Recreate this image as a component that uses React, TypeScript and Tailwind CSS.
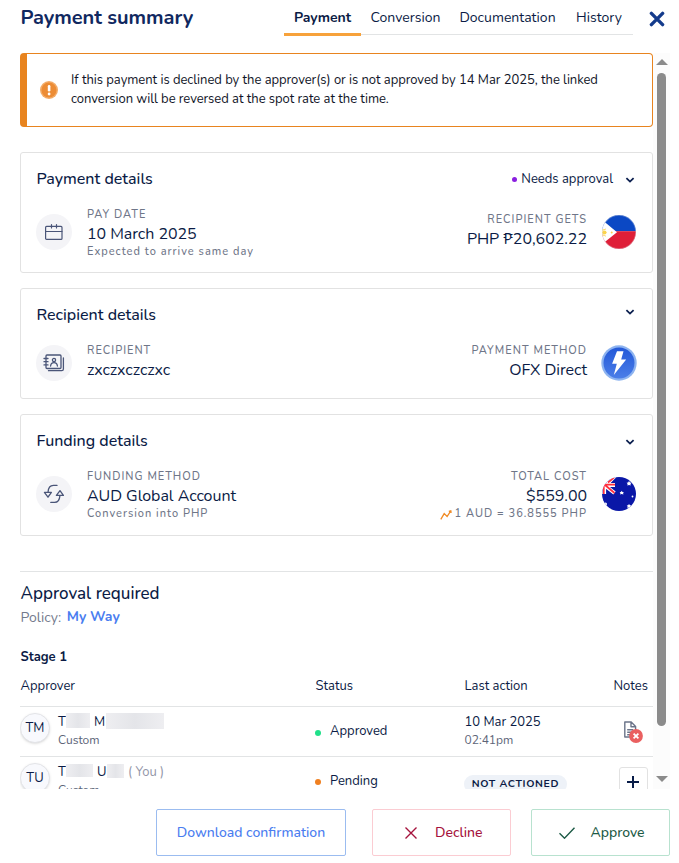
import type { ReactNode } from "react";
import { clsx } from "clsx";

const tabs = [
  { label: "Payment", className: "w-[77px] font-bold" },
  { label: "Conversion", className: "w-[89px]" },
  { label: "Documentation", className: "w-[115px]" },
  { label: "History", className: "w-[68px]" },
];

const ChevronDown = ({ className }: { className?: string }) => (
  <svg
    viewBox="0 0 10 8"
    className={clsx("h-2 w-2.5 shrink-0", className)}
    fill="none"
    stroke="#0b1f4f"
    strokeWidth="1.8"
  >
    <path d="M1.4 2.2 5 5.6l3.6-3.4" />
  </svg>
);

const CalendarIcon = () => (
  <svg
    viewBox="0 0 18 18"
    className="h-[18px] w-[18px]"
    fill="none"
    stroke="#4a5578"
    strokeWidth="1.2"
    strokeLinecap="round"
  >
    <rect x="0.6" y="3.4" width="16.4" height="13" rx="1" />
    <path d="M.6 8.500h16.400M6.500 1.500v3.400M11.500 1.500v3.400" />
  </svg>
);

const ContactIcon = () => (
  <svg
    viewBox="0 0 22 18"
    className="h-[18px] w-[22px]"
    fill="none"
    stroke="#4a5578"
    strokeWidth="1.3"
    strokeLinecap="round"
  >
    <rect x="3" y="1" width="15" height="13.5" rx="1" />
    <path d="M1 4.5h4M1 7.7h4M1 10.9h4" />
    <path d="M20.4 4v11a1.7 1.7 0 0 1-1.7 1.7H5.5" />
    <circle cx="11" cy="6" r="1.6" />
    <path d="M7.6 12c.2-2.2 1.5-3.4 3.4-3.4s3.200 1.200 3.400 3.400" />
  </svg>
);

const ExchangeIcon = () => (
  <svg
    viewBox="0 0 22 20"
    className="h-5 w-[22px]"
    fill="none"
    stroke="#4a5578"
    strokeWidth="1.3"
    strokeLinecap="round"
    strokeLinejoin="round"
  >
    <path d="M14 1.400h-3.600C7.300 1.400 5.300 4 5 8.200M1.400 8.400h7L5 13.200z" />
    <path d="M7.800 18.400h3.800c3.200 0 5-2.600 5.300-6.800M13.400 11.400h7L17 6.600z" />
  </svg>
);

const PhilippinesFlag = () => (
  <svg viewBox="0 0 34 34" className="h-[34px] w-[34px]">
    <defs>
      <clipPath id="ph">
        <circle cx="17" cy="17" r="17" />
      </clipPath>
    </defs>
    <g clipPath="url(#ph)">
      <rect width="34" height="16.200" fill="#0b48c4" />
      <rect y="16.200" width="34" height="18" fill="#df1f38" />
      <path d="M-1 4 15 17.200-1 30z" fill="#fff" />
      <circle cx="2.600" cy="17.500" r="1.900" fill="#fbd34d" />
      <path
        d="M.8 14v7M-.5 17.500h5M1 15l3-1M1 20l3 1.200"
        stroke="#fbd34d"
        strokeWidth=".8"
      />
      <circle cx="9.700" cy="17.500" r="1" fill="#fbd34d" />
    </g>
    <circle
      cx="17"
      cy="17"
      r="16.700"
      fill="none"
      stroke="#d9dbe3"
      strokeOpacity=".6"
      strokeWidth=".6"
    />
  </svg>
);

const AustraliaFlag = () => (
  <svg viewBox="0 0 34 34" className="h-[34px] w-[34px]">
    <defs>
      <clipPath id="au">
        <circle cx="17" cy="17" r="17" />
      </clipPath>
    </defs>
    <g clipPath="url(#au)">
      <rect width="34" height="34" fill="#0a17a7" />
      <path
        d="M-1 8h14M2.200-1v18M1 7l11.500 9M4 8 13-1"
        stroke="#fff"
        strokeWidth="3.800"
      />
      <path
        d="M-1 7.600h14M1.800 7v10M3 8l9.500 8M6 5.500 12 .5"
        stroke="#ff2d3d"
        strokeWidth="1.700"
      />
      <g fill="#fff">
        <path d="m27 4 1 1.500 1.500.2-1 1.200.2 1.600-1.700-.6-1.600.6.200-1.600-1-1.200 1.500-.2z" />
        <path d="m19.700 13.800.8 1.100 1.400.1-.8 1.100.3 1.500-1.700-.5-1.500.5.200-1.500-.8-1.100 1.400-.1z" />
        <path d="m27 27 1 1.200 1.400.2-.9 1.100.2 1.500-1.700-.6-1.600.6.200-1.500-.9-1.100 1.400-.2z" />
        <circle cx="30.500" cy="19.500" r=".9" />
        <circle cx="3.500" cy="27" r="1.500" />
      </g>
    </g>
  </svg>
);

const DirectIcon = () => (
  <svg viewBox="0 0 36 36" className="h-9 w-9">
    <defs>
      <linearGradient id="direct" x1="0" y1="0" x2="0" y2="1">
        <stop offset="0" stopColor="#2358d8" />
        <stop offset="1" stopColor="#4b7ee8" />
      </linearGradient>
    </defs>
    <circle cx="18" cy="18" r="17.700" fill="#8eb4f0" />
    <circle cx="18" cy="18" r="15.500" fill="url(#direct)" />
    <path d="M16 6.200h6.500l-2.300 8.400h5L12.800 30l3-11.300h-4.700z" fill="#fff" />
  </svg>
);

const TrendIcon = () => (
  <svg
    viewBox="0 0 12 12"
    className="h-3 w-3 translate-y-px"
    fill="none"
    stroke="#f08a24"
    strokeWidth="1.300"
  >
    <path d="m.8 10.400 3.400-5.800 2.900 2.900L10.800 1.800M8.800 2.300l2-.5.400 2" />
  </svg>
);

const NoteIcon = () => (
  <svg viewBox="0 0 20 22" className="h-[22px] w-5" fill="none">
    <path
      d="M1.800 1h6.400L12.600 5.400V16H1.800zM8 1v4.700h4.600M4.200 8.700h6M4.200 11.200h6M4.200 13.700h4"
      stroke="#6b7489"
      strokeWidth="1.400"
      strokeLinejoin="round"
    />
    <circle cx="13" cy="15" r="6.900" fill="#ea6060" />
    <path
      d="m10.600 12.600 4.800 4.800M15.400 12.600l-4.800 4.800"
      stroke="#fff"
      strokeWidth="1.800"
    />
  </svg>
);

const Label = ({ children }: { children: ReactNode }) => (
  <div className="h-4 text-[11px] leading-[18px] font-medium tracking-[1px] text-[#6f7688]">
    {children}
  </div>
);

const Value = ({ children }: { children: ReactNode }) => (
  <div className="text-base leading-6 tracking-[-0.04px]">{children}</div>
);

const SubText = ({ children }: { children: ReactNode }) => (
  <div className="flex h-3 items-center justify-end gap-0.5 text-[11px] leading-3 font-medium tracking-[1px] text-[#6f7688]">
    {children}
  </div>
);

type DetailCardProps = {
  title: string;
  className: string;
  status?: ReactNode;
  chevronClassName?: string;
  icon: ReactNode;
  left: ReactNode;
  right: ReactNode;
  badge: ReactNode;
};

const DetailCard = ({
  title,
  className,
  status,
  chevronClassName,
  icon,
  left,
  right,
  badge,
}: DetailCardProps) => (
  <section
    className={clsx(
      "shrink-0 rounded-[3px] border border-[#e2e2e2] px-[15px] pt-3.5",
      className
    )}
  >
    <div className="flex h-6 items-center justify-between pr-0.5 pl-[0.5px]">
      <h2 className="text-base font-medium">{title}</h2>
      <div className="flex items-center gap-3">
        {status}
        <ChevronDown className={chevronClassName} />
      </div>
    </div>
    <div className="mt-[15px] flex items-center">
      <div className="flex h-9 w-9 items-center justify-center rounded-full bg-[#f4f4f7]">
        {icon}
      </div>
      <div className="ml-[15px] flex flex-1 flex-col items-start">{left}</div>
      <div className="mr-3.5 text-right">{right}</div>
      <div className="flex w-9 justify-center">{badge}</div>
    </div>
  </section>
);

const Avatar = ({ initials }: { initials: string }) => (
  <div className="mt-1.5 flex h-[30px] w-[30px] shrink-0 items-center justify-center rounded-full border border-[#e3e4e8] bg-[#f8f9fd] pb-px text-[13px] leading-4 shadow-sm">
    {initials}
  </div>
);

// Masked part of a name
const Redacted = ({ className }: { className: string }) => (
  <span
    className={clsx(
      "-mt-[5px] inline-block bg-linear-to-r from-[#eeeef1] via-[#e4e5e9] to-[#eeeef1]",
      className
    )}
  />
);

const Header = () => (
  <header className="flex h-[53px] shrink-0 items-start pl-[20.5px]">
    <h1 className="w-[263.5px] pt-[3px] text-xl leading-[30px] font-bold tracking-[-0.04px] text-[#102860]">
      Payment summary
    </h1>
    <nav className="flex h-[35px] border-b border-[#e2e4e5]">
      {tabs.map((tab, i) => (
        <button
          key={tab.label}
          className={clsx(
            "h-9 pt-0.5 text-center text-sm",
            i === 0 ? "border-b-[3px] border-[#f7a23b]" : "pb-[3px]",
            tab.className
          )}
        >
          {tab.label}
        </button>
      ))}
    </nav>
    <button aria-label="Close" className="mt-[11px] ml-4">
      <svg
        viewBox="0 0 16 16"
        className="h-4 w-4"
        stroke="#143b8c"
        strokeWidth="3.400"
        strokeLinecap="round"
      >
        <path d="m2.400 2.400 11.200 11.200M13.600 2.400 2.400 13.600" />
      </svg>
    </button>
  </header>
);

const Scrollbar = () => (
  <div className="flex w-[17px] flex-col items-center bg-[#fcfcfc] pt-1.5 pb-[7px]">
    <svg viewBox="0 0 12 6" className="h-1.5 w-3" fill="#8b8b8b">
      <path d="m6 0 6 6H0z" />
    </svg>
    <div className="mt-2 h-[653px] w-[9px] rounded-full bg-[#8b8b8b]" />
    <svg viewBox="0 0 12 6" className="mt-auto h-1.5 w-3" fill="#8b8b8b">
      <path d="M0 0h12L6 6z" />
    </svg>
  </div>
);

const columns = "grid grid-cols-[295.5px_149px_1fr_39.5px]";

const ApprovalTable = () => (
  <section className="mt-[35px] shrink-0 border-t border-[#e2e4e5] pt-2.5">
    <h2 className="pl-[0.5px] text-[17px] leading-6 font-medium">
      Approval required
    </h2>
    <p className="pl-[0.5px] text-sm leading-6 text-[#737a8c]">
      Policy:{" "}
      <a className="ml-0.5 inline-block -translate-y-px font-bold text-[#4a7df0]">
        My Way
      </a>
    </p>
    <h3 className="mt-[17px] pl-[0.5px] text-[13px] leading-5 font-bold">
      Stage 1
    </h3>
    <div
      className={clsx(
        columns,
        "mt-1 h-[35px] items-center pb-[5px] text-[13px] leading-5"
      )}
    >
      <span className="pl-[0.5px]">Approver</span>
      <span>Status</span>
      <span>Last action</span>
      <span>Notes</span>
    </div>

    <div
      className={clsx(
        columns,
        "h-[50px] border-t border-[#e2e4e5] text-[13px]"
      )}
    >
      <div className="flex gap-2">
        <Avatar initials="TM" />
        <div>
          <div className="mt-1.5 flex h-[18px] items-center pt-0.5">
            <span className="w-2">T</span>
            <Redacted className="h-[15px] w-6" />
            <span className="ml-1 w-3">M</span>
            <Redacted className="h-4 w-[58px]" />
          </div>
          <div className="text-xs leading-[18px] text-[#5c6478]">Custom</div>
        </div>
      </div>
      <div className="-ml-px flex items-center gap-[9.5px]">
        <span className="mt-0.5 h-1.5 w-1.5 rounded-full bg-[#20e08a]" />
        Approved
      </div>
      <div className="pt-1.5 leading-[18px]">
        <div>10 Mar 2025</div>
        <div className="text-xs leading-[18px] text-[#5c6478]">02:41pm</div>
      </div>
      <div className="pt-3.5 pl-[9.5px]">
        <NoteIcon />
      </div>
    </div>

    <div
      className={clsx(
        columns,
        "h-[50px] border-t border-[#e2e4e5] text-[13px]"
      )}
    >
      <div className="flex gap-2">
        <Avatar initials="TU" />
        <div>
          <div className="mt-1.5 flex h-[18px] items-center pt-0.5">
            <span className="w-2">T</span>
            <Redacted className="h-[13px] w-[27px]" />
            <span className="ml-1 w-2.5">U</span>
            <Redacted className="h-3.5 w-[17px]" />
            <span className="ml-1 text-[#9296a8]">( You )</span>
          </div>
          <div className="text-xs leading-[18px] text-[#5c6478]">Custom</div>
        </div>
      </div>
      <div className="-ml-px flex items-center gap-[9.5px]">
        <span className="h-1.5 w-1.5 rounded-full bg-[#f08020]" />
        Pending
      </div>
      <div className="-ml-[0.5px] pt-[18px]">
        <span className="flex h-[18px] w-[103px] items-center justify-center rounded-full bg-[#eef2f8] text-[10.5px] font-bold tracking-[0.65px]">
          NOT ACTIONED
        </span>
      </div>
      <div className="pt-2.5 pl-[5px]">
        <button className="flex h-[29px] w-[29px] items-center justify-center rounded-[3px] border border-[#e2e2e2]">
          <svg
            viewBox="0 0 12 12"
            className="h-3 w-3"
            stroke="#081c48"
            strokeWidth="2"
          >
            <path d="M6 0v12M0 6h12" />
          </svg>
        </button>
      </div>
    </div>
  </section>
);

const Footer = () => (
  <footer className="mt-5 flex h-[47px] pl-[156px] text-sm font-medium">
    <button className="w-[190px] rounded-[2px] border border-[#9bbcf0] text-[#4a7df0]">
      Download confirmation
    </button>
    <button className="ml-[26px] flex w-[139px] items-center rounded-[2px] border border-[#fbccd2] pl-8 text-[#a5123c]">
      <svg
        viewBox="0 0 12 12"
        className="mr-[18px] h-3 w-3"
        stroke="currentColor"
        strokeWidth="1.400"
      >
        <path d="m.5.5 11 11M11.500.5l-11 11" />
      </svg>
      Decline
    </button>
    <button className="ml-5 flex w-[139px] items-center rounded-[2px] border border-[#b8e2cf] pl-[27px] text-[#1c5a45]">
      <svg
        viewBox="0 0 16 12"
        className="mr-[15.5px] h-3 w-4"
        fill="none"
        stroke="currentColor"
        strokeWidth="1.400"
      >
        <path d="m.5 6.200 5 5L15.500.8" />
      </svg>
      Approve
    </button>
  </footer>
);

const App = () => {
  return (
    <div className="h-[863px] w-[679px] overflow-hidden bg-white font-['Nunito','Lato','Noto_Sans',sans-serif] text-[#0b1b45]">
      <Header />
      <div className="flex h-[736px] w-[670px] pl-5">
        <main className="flex w-[633px] flex-col overflow-hidden">
          <div className="flex h-[74px] shrink-0 items-center rounded-[4px] border border-l-[7px] border-[#e8841f] pl-[12.5px] text-[13px] leading-[19px] tracking-[-0.042px] text-[#111528]">
            <svg
              viewBox="0 0 18 18"
              className="mr-[13.5px] h-[18px] w-[18px]"
            >
              <circle cx="9" cy="9" r="9" fill="#f3ac68" />
              <circle cx="9" cy="9" r="7.500" fill="#ec8c35" />
              <rect x="7.800" y="4" width="2.600" height="6.500" rx="1.300" fill="#fff" />
              <circle cx="9.100" cy="13" r="1.400" fill="#fff" />
            </svg>
            <p>
              If this payment is declined by the approver(s) or is not approved
              by 14 Mar 2025, the linked
              <br />
              conversion will be reversed at the spot rate at the time.
            </p>
          </div>

          <DetailCard
            title="Payment details"
            className="mt-[25px] h-[121px]"
            chevronClassName="mt-0.5"
            status={
              <span className="flex items-center gap-1 pt-px text-[13px]">
                <span className="h-[5px] w-[5px] rounded-full bg-[#8a1fe0]" />
                Needs approval
              </span>
            }
            icon={<CalendarIcon />}
            left={
              <>
                <Label>PAY DATE</Label>
                <Value>10 March 2025</Value>
                <SubText>Expected to arrive same day</SubText>
              </>
            }
            right={
              <div className="-mt-0.5">
                <Label>RECIPIENT GETS</Label>
                <Value>PHP ₱20,602.22</Value>
              </div>
            }
            badge={<PhilippinesFlag />}
          />

          <DetailCard
            title="Recipient details"
            className="mt-[15px] h-[111px]"
            chevronClassName="-mt-1.5"
            icon={<ContactIcon />}
            left={
              <div className="pb-0.5">
                <Label>RECIPIENT</Label>
                <Value>zxczxczczxc</Value>
              </div>
            }
            right={
              <div className="pb-0.5">
                <Label>PAYMENT METHOD</Label>
                <Value>OFX Direct</Value>
              </div>
            }
            badge={<DirectIcon />}
          />

          <DetailCard
            title="Funding details"
            className="mt-[15px] h-[122px]"
            chevronClassName="mt-0.5"
            icon={<ExchangeIcon />}
            left={
              <>
                <Label>FUNDING METHOD</Label>
                <Value>AUD Global Account</Value>
                <SubText>Conversion into PHP</SubText>
              </>
            }
            right={
              <>
                <Label>TOTAL COST</Label>
                <Value>$559.00</Value>
                <SubText>
                  <TrendIcon />1 AUD = 36.8555 PHP
                </SubText>
              </>
            }
            badge={<AustraliaFlag />}
          />

          <ApprovalTable />
        </main>
        <Scrollbar />
      </div>
      <Footer />
    </div>
  );
};

export default App;
